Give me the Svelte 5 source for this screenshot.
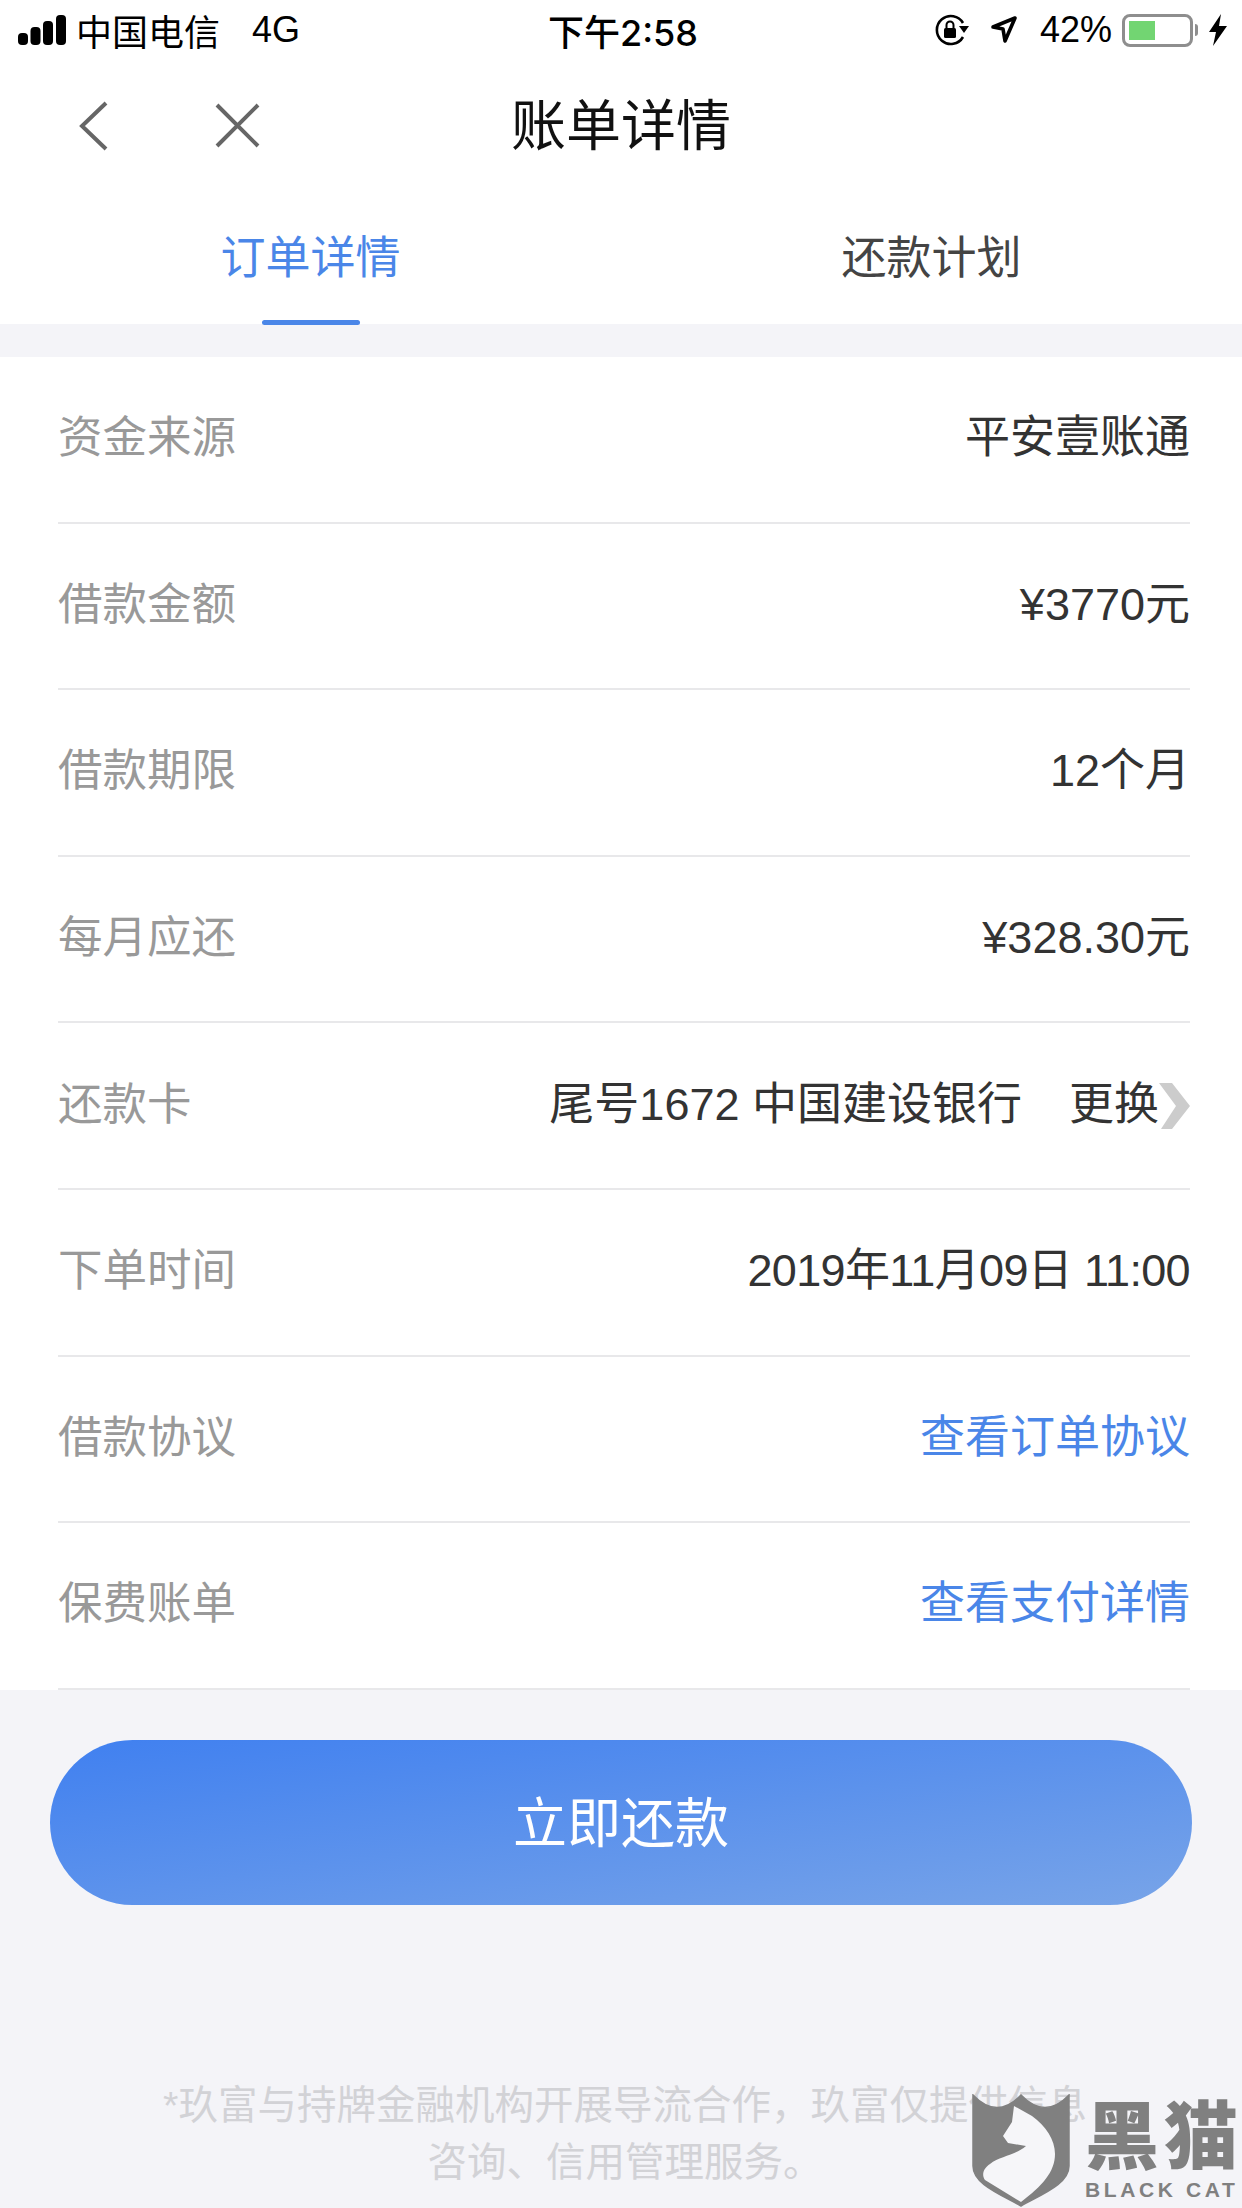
<script lang="ts">
  const rows = [
    { label: '资金来源', value: '平安壹账通' },
    { label: '借款金额', value: '¥3770元' },
    { label: '借款期限', value: '12个月' },
    { label: '每月应还', value: '¥328.30元' },
    { label: '还款卡', value: '尾号1672 中国建设银行', action: '更换' },
    { label: '下单时间', value: '2019年11月09日 11:00', tight: true },
    { label: '借款协议', value: '查看订单协议', link: true },
    { label: '保费账单', value: '查看支付详情', link: true }
  ];
</script>

<div class="page">
  <header class="status">
    <div class="status-left">
      <svg class="signal" width="48" height="30" viewBox="0 0 48 30">
        <rect x="0" y="18" width="10" height="12" rx="4" />
        <rect x="12.5" y="12" width="10" height="18" rx="4" />
        <rect x="25" y="6" width="10" height="24" rx="4" />
        <rect x="38" y="0" width="10" height="30" rx="4" />
      </svg>
      <span>中国电信</span>
      <span class="net">4G</span>
    </div>
    <div class="status-time">下午<span class="clock">2:58</span></div>
    <div class="status-right">
      <svg width="36" height="32" viewBox="0 0 36 32">
        <path d="M29 9A14 14 0 1 0 29 23" fill="none" stroke="#000" stroke-width="2.6" />
        <path d="M25 12h10l-5 7z" fill="#000" />
        <rect x="10" y="14" width="12" height="10" rx="1.500" fill="#000" />
        <path d="M12.500 14v-3a3.500 3.500 0 0 1 7 0v3" fill="none" stroke="#000" stroke-width="2" />
      </svg>
      <svg class="arrow" width="28" height="30" viewBox="0 0 28 30">
        <path d="M3 12L25 3L15 26L13 14z" fill="none" stroke="#000" stroke-width="3.6" stroke-linejoin="round" />
      </svg>
      <span class="pct">42%</span>
      <div class="battery"><div class="battery-fill"></div></div>
      <div class="nub"></div>
      <svg class="bolt" width="20" height="32" viewBox="0 0 20 32">
        <path d="M13 0L1 18h7L5 32L19 12h-8z" fill="#000" />
      </svg>
    </div>
  </header>

  <nav class="nav">
    <svg class="back" width="30" height="50" viewBox="0 0 30 50">
      <path d="M27 2L3 25L27 48" fill="none" stroke="#666" stroke-width="4" />
    </svg>
    <svg class="close" width="45" height="45" viewBox="0 0 45 45">
      <path d="M2 2L43 43M43 2L2 43" fill="none" stroke="#666" stroke-width="4" />
    </svg>
    <h1>账单详情</h1>
  </nav>

  <div class="tabs">
    <div class="tab active">订单详情</div>
    <div class="tab">还款计划</div>
  </div>

  <section class="list">
    {#each rows as row}
      <div class="row">
        <span class="label">{row.label}</span>
        <span class="value" class:link={row.link} class:tight={row.tight}>
          <span>{row.value}</span>
          {#if row.action}
            <span class="action">{row.action}</span>
            <svg class="chev" width="31" height="46" viewBox="0 0 31 46">
              <path d="M0 0H13L31 23L13 46H2L17 23z" fill="#ccc" />
            </svg>
          {/if}
        </span>
      </div>
    {/each}
  </section>

  <div class="pay">立即还款</div>

  <p class="note">*玖富与持牌金融机构开展导流合作，玖富仅提供信息<br />咨询、信用管理服务。</p>

  <div class="mark">
    <svg width="98" height="114" viewBox="0 0 98 114">
      <path d="M1 1Q25 26 49 1Q73 26 97 1V72C97 90 70 100 49 112C28 100 1 90 1 72z" fill="#808080" stroke="#808080" stroke-width="1.500" />
      <path d="M42 12L60 22C74 32 83 46 83 60C83 78 70 92 49 108L13 86C9 80 12 74 18 70C28 62 42 62 54 52L36 49L31 42L40 28z" fill="#f6f6f9" />
    </svg>
    <div class="mark-text">
      <div class="mark-cn">黑猫</div>
      <div class="mark-en">BLACK CAT</div>
    </div>
  </div>
</div>

<style>
  :global(body) {
    margin: 0;
  }

  .page {
    position: relative;
    height: 2208px;
    overflow: hidden;
    background: #f4f4f8;
    font-family: "Liberation Sans", "Noto Sans CJK SC", sans-serif;
    color: #333;
  }

  .status {
    display: grid;
    grid-template-columns: 1fr auto 1fr;
    align-items: center;
    height: 60px;
    padding: 0 14px 0 18px;
    background: #fff;
    color: #000;
    font-size: 36px;
  }

  .status-left {
    display: flex;
    align-items: center;
    gap: 10px;
  }

  .signal {
    fill: #000;
  }

  .net {
    margin-left: 22px;
    font-size: 36px;
  }

  .status-time {
    font-size: 36px;
    font-weight: 500;
  }

  .clock {
    font-family: Inter, "Liberation Sans", sans-serif;
    font-weight: 500;
  }

  .status-right {
    display: flex;
    align-items: center;
    justify-content: flex-end;
  }

  .arrow {
    margin-left: 20px;
  }

  .pct {
    margin-left: 22px;
  }

  .battery {
    box-sizing: border-box;
    width: 71px;
    height: 33px;
    margin-left: 10px;
    padding: 4px;
    border: 3px solid #8e8e8e;
    border-radius: 8px;
  }

  .battery-fill {
    width: 26px;
    height: 100%;
    background: #72d572;
  }

  .nub {
    width: 3px;
    height: 12px;
    margin-left: 2px;
    border-radius: 0 3px 3px 0;
    background: #8e8e8e;
  }

  .bolt {
    margin-left: 10px;
  }

  .nav {
    position: relative;
    box-sizing: border-box;
    display: flex;
    align-items: center;
    justify-content: center;
    height: 128px;
    padding-bottom: 6px;
    background: #fff;
  }

  .nav h1 {
    margin: 0;
    font-size: 55px;
    font-weight: 400;
    color: #111;
  }

  .back {
    position: absolute;
    left: 79px;
    top: 41px;
  }

  .close {
    position: absolute;
    left: 215px;
    top: 43px;
  }

  .tabs {
    display: grid;
    grid-template-columns: 1fr 1fr;
    height: 136px;
    background: #fff;
  }

  .tab {
    position: relative;
    padding-top: 39px;
    font-size: 45px;
    line-height: 64px;
    text-align: center;
    color: #444;
  }

  .tab.active {
    color: #4a86e8;
  }

  .tab.active::after {
    content: "";
    position: absolute;
    left: 50%;
    bottom: -1px;
    width: 98px;
    height: 5px;
    margin-left: -49px;
    border-radius: 3px;
    background: #4a86e8;
  }

  .list {
    margin-top: 33px;
    padding: 0 52px 0 58px;
    background: #fff;
  }

  .row {
    box-sizing: border-box;
    display: flex;
    align-items: center;
    justify-content: space-between;
    height: 166.6px;
    padding-bottom: 11px;
    font-size: 45px;
    border-bottom: 2px solid #e8e8ea;
  }

  .label {
    color: #999;
    font-size: 44.5px;
  }

  .value {
    display: flex;
    align-items: center;
    color: #333;
    white-space: nowrap;
  }

  .value.link {
    color: #4a86e8;
  }

  .value.tight {
    letter-spacing: -0.65px;
  }

  .action {
    margin-left: 47px;
  }

  .chev {
    margin-top: 11px;
  }

  .pay {
    box-sizing: border-box;
    display: flex;
    align-items: center;
    justify-content: center;
    height: 165px;
    margin: 50px 50px 0;
    padding-bottom: 5px;
    border-radius: 83px;
    background: linear-gradient(172deg, #4080f0 0%, #78a4e8 100%);
    color: #fff;
    font-size: 54px;
  }

  .note {
    margin: 172px 96px 0 104px;
    font-size: 39.5px;
    line-height: 57px;
    text-align: center;
    white-space: nowrap;
    color: #d2d2d6;
  }

  .mark {
    position: absolute;
    left: 972px;
    top: 2094px;
    display: flex;
    gap: 15px;
    color: #808080;
  }

  .mark-text {
    padding-top: 6px;
  }

  .mark-cn {
    font-size: 74px;
    line-height: 76px;
    font-weight: 900;
    letter-spacing: 5px;
    white-space: nowrap;
  }

  .mark-en {
    margin-top: 2px;
    font-size: 21px;
    line-height: 24px;
    font-weight: 700;
    letter-spacing: 3.6px;
    white-space: nowrap;
  }
</style>
